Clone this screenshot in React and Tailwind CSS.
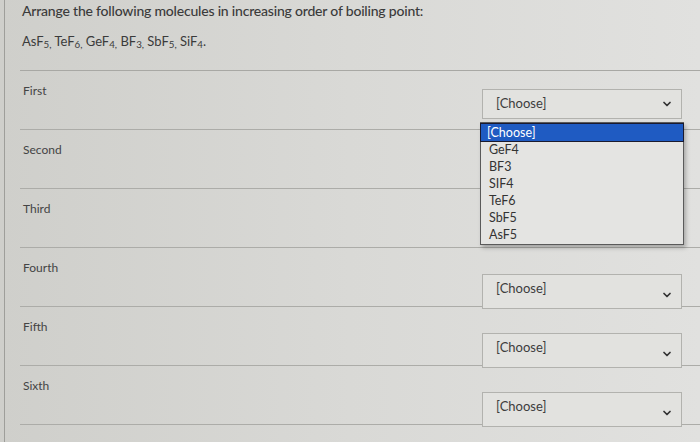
import { ChevronDown } from 'lucide-react'

const rows = ['First', 'Second', 'Third', 'Fourth', 'Fifth', 'Sixth']
const options = ['[Choose]', 'GeF4', 'BF3', 'SIF4', 'TeF6', 'SbF5', 'AsF5']

function Select({ low }) {
  return (
    <div
      className={
        (low ? 'mt-[26px] h-[35px] ' : 'mt-[18px] h-[30px] ') +
        'mr-[18px] w-[200px] border border-[#b2b2ae] bg-[#e2e2df] flex items-center justify-between pl-[13px] pr-[8px] text-[13px] text-[#3d3d3d]'
      }
    >
      <span className={low ? '-mt-[6px]' : ''}>[Choose]</span>
      <ChevronDown size={12} strokeWidth={3.5} className={low ? 'mt-[6px] text-[#333]' : 'text-[#333]'} />
    </div>
  )
}

export default function App() {
  return (
    <div className="relative w-[700px] h-[442px] overflow-hidden bg-gradient-to-r from-[#cfcfcb] via-[#d9d9d6] to-[#e1e1df] font-['Lato',sans-serif] text-[#3b3b3b]">
      <div className="absolute left-[4px] top-0 bottom-0 w-px bg-[#9e9e9a]" />
      <div className="pl-[22px] pt-[1px]">
        <p className="text-[14px] leading-[20px] font-medium tracking-[-0.2px]">
          Arrange the following molecules in increasing order of boiling point:
        </p>
        <p className="mt-[11px] text-[13px] leading-[18px]">
          AsF<sub>5,</sub> TeF<sub>6,</sub> GeF<sub>4,</sub> BF<sub>3,</sub> SbF<sub>5,</sub> SiF<sub>4</sub>.
        </p>
      </div>
      <div className="ml-[20px] mt-[20px] border-t border-[#a8a8a4]">
        {rows.map((r, i) => (
          <div key={r} className="h-[59px] border-b border-[#acaca8] flex justify-between">
            <span className="pt-[12px] pl-[3px] text-[12px] leading-[16px] text-[#444]">{r}</span>
            <Select low={i > 2} />
          </div>
        ))}
      </div>
      <div className="absolute left-[480px] top-[122px] w-[204px] border border-[#5a5a5a] bg-[#e4e4e2] shadow-[2px_3px_4px_rgba(0,0,0,0.25)] py-px text-[12.5px] leading-[17px] text-[#333]">
        {options.map((o, i) => (
          <div
            key={o}
            className={
              i === 0
                ? 'bg-[#1f5bc2] text-white px-[6px] outline outline-1 outline-[#1a1a2e]'
                : 'px-[8px]'
            }
          >
            {o}
          </div>
        ))}
      </div>
    </div>
  )
}
